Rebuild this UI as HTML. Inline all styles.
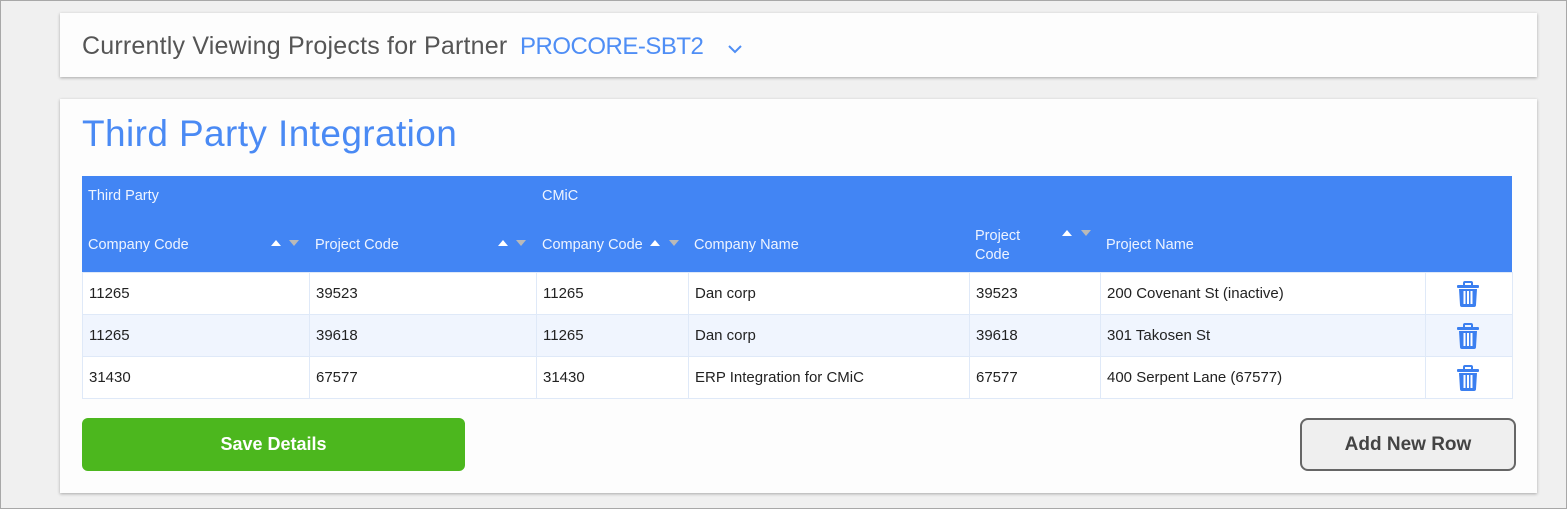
<!DOCTYPE html>
<html><head><meta charset="utf-8"><style>
*{margin:0;padding:0;box-sizing:border-box}
body{width:1567px;height:509px;background:#f0f0f0;font-family:"Liberation Sans",sans-serif;position:relative;overflow:hidden;border:1px solid #a8a8a8}
.card{position:absolute;background:#fdfdfd;box-shadow:0 1px 3px rgba(0,0,0,.3)}
.a{position:absolute;white-space:nowrap}
table{position:absolute;left:81px;top:176px;border-collapse:collapse;font-size:15px;color:#222;letter-spacing:0}
td{border:1px solid #dfe9f8;padding-left:6px;height:42px;white-space:nowrap}
.hd{background:#4285f4;position:absolute;left:81px;top:175px;width:1430px;height:96px;color:#eef4ff;font-size:14.5px;letter-spacing:0}
.tri{position:absolute;width:0;height:0;border-left:5px solid transparent;border-right:5px solid transparent}
.up{border-bottom:6px solid #fff}.dn{border-top:6px solid #b9b9b9}
</style></head><body>
<div class="card" style="left:59px;top:12px;width:1477px;height:64px"></div>
<div class="a" style="left:81px;top:31px;font-size:25px;color:#555;letter-spacing:0.2px">Currently Viewing Projects for Partner</div>
<div class="a" style="left:519px;top:32px;font-size:24px;color:#4f8ef5;letter-spacing:-0.5px">PROCORE-SBT2</div>
<svg class="a" style="left:726px;top:42px" width="16" height="12"><path d="M2 3l6 6 6-6" stroke="#4f8ef5" stroke-width="2" fill="none"/></svg>
<div class="card" style="left:59px;top:98px;width:1477px;height:394px"></div>
<div class="a" style="left:81px;top:112px;font-size:37px;color:#4a8af4;letter-spacing:0.4px">Third Party Integration</div>
<div class="hd">
<div class="a" style="left:6px;top:12px">Third Party</div>
<div class="a" style="left:460px;top:12px">CMiC</div>
<div class="a" style="left:6px;top:61px">Company Code</div>
<div class="a" style="left:233px;top:61px">Project Code</div>
<div class="a" style="left:460px;top:61px">Company Code</div>
<div class="a" style="left:612px;top:61px">Company Name</div>
<div class="a" style="left:893px;top:51px;line-height:19px">Project<br>Code</div>
<div class="a" style="left:1024px;top:61px">Project Name</div>
<div class="tri up" style="left:189px;top:64px"></div><div class="tri dn" style="left:207px;top:64px"></div>
<div class="tri up" style="left:416px;top:64px"></div><div class="tri dn" style="left:434px;top:64px"></div>
<div class="tri up" style="left:568px;top:64px"></div><div class="tri dn" style="left:587px;top:64px"></div>
<div class="tri up" style="left:980px;top:54px"></div><div class="tri dn" style="left:999px;top:54px"></div>
</div>
<table style="top:271px">
<tr style="background:#fff"><td style="width:227px">11265</td><td style="width:227px">39523</td><td style="width:152px">11265</td><td style="width:281px">Dan corp</td><td style="width:131px">39523</td><td style="width:325px">200 Covenant St (inactive)</td><td style="width:87px"></td></tr>
<tr style="background:#f0f5fe"><td>11265</td><td>39618</td><td>11265</td><td>Dan corp</td><td>39618</td><td>301 Takosen St</td><td></td></tr>
<tr style="background:#fff"><td>31430</td><td>67577</td><td>31430</td><td>ERP Integration for CMiC</td><td>67577</td><td>400 Serpent Lane (67577)</td><td></td></tr>
</table>
<svg class="a" style="left:1455px;top:280px" width="26" height="110" fill="#3b7ff0">
<g id="t"><rect x="1" y="4" width="22" height="3" rx="1"/><rect x="8" y="1" width="8" height="4" rx="1" fill="none" stroke="#3b7ff0" stroke-width="2"/><path d="M3 8h18l-1 16q0 2-2 2H6q-2 0-2-2z"/><rect x="7.5" y="10" width="2" height="13" fill="#fff"/><rect x="11" y="10" width="2" height="13" fill="#fff"/><rect x="14.5" y="10" width="2" height="13" fill="#fff"/></g>
<use href="#t" y="42"/><use href="#t" y="84"/>
</svg>
<div class="a" style="left:81px;top:417px;width:383px;height:53px;background:#4cb71e;border-radius:6px;color:#fff;font-weight:bold;font-size:18px;text-align:center;line-height:53px">Save Details</div>
<div class="a" style="left:1299px;top:417px;width:216px;height:53px;background:#efefef;border:2px solid #666;border-radius:8px;color:#444;font-weight:bold;font-size:19px;text-align:center;line-height:49px">Add New Row</div>
</body></html>
